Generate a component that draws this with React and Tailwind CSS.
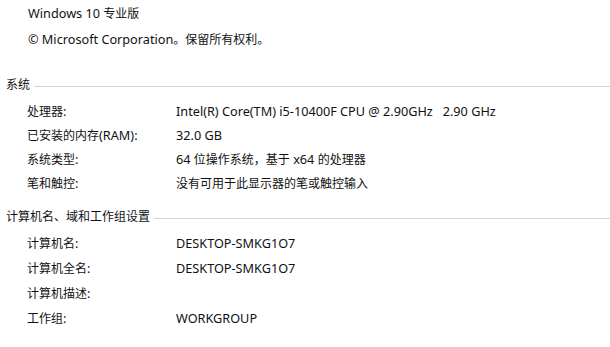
// split a string into CJK / latin runs so latin can be sized a bit larger
function Txt({ children }) {
  const parts = String(children).split(/([\u3000-\u303f\u4e00-\u9fff\uff00-\uffef]+)/);
  return parts.map((p, i) =>
    p === "" ? null : /[\u3000-\u303f\u4e00-\u9fff\uff00-\uffef]/.test(p) ? (
      <span key={i} className="text-[12px]">{p}</span>
    ) : (
      <span key={i} className="text-[12.7px] whitespace-pre">{p}</span>
    )
  );
}

export default function App() {
  const system = [
    ["处理器:", "Intel(R) Core(TM) i5-10400F CPU @ 2.90GHz   2.90 GHz"],
    ["已安装的内存(RAM):", "32.0 GB"],
    ["系统类型:", "64 位操作系统，基于 x64 的处理器"],
    ["笔和触控:", "没有可用于此显示器的笔或触控输入"],
  ];
  const computer = [
    ["计算机名:", "DESKTOP-SMKG1O7"],
    ["计算机全名:", "DESKTOP-SMKG1O7"],
    ["计算机描述:", ""],
    ["工作组:", "WORKGROUP"],
  ];

  return (
    <div
      className="w-[610px] h-[347px] overflow-hidden bg-white text-[12px] text-[#111]"
      style={{ fontFamily: '"Segoe UI", "Noto Sans", "Noto Sans CJK SC", sans-serif' }}
    >
      {/* edition */}
      <div className="pl-[28px] pt-[1px]">
        <div className="h-[26px] flex items-center"><Txt>Windows 10 专业版</Txt></div>
        <div className="h-[26px] flex items-center"><Txt>© Microsoft Corporation。保留所有权利。</Txt></div>
      </div>

      {/* system */}
      <div className="mt-[20px] h-[24px] flex items-center pl-[6px]">
        <span>系统</span>
        <div className="flex-1 h-px bg-[#d4d4d4] ml-[4px] mt-[3px]" />
      </div>
      <div className="pl-[27px] pt-[3px]">
        {system.map(([k, v]) => (
          <div key={k} className="grid grid-cols-[149px_1fr] h-[24px] items-center">
            <span><Txt>{k}</Txt></span>
            <span><Txt>{v}</Txt></span>
          </div>
        ))}
      </div>

      {/* computer name */}
      <div className="mt-[9px] h-[24px] flex items-center pl-[6px]">
        <span>计算机名、域和工作组设置</span>
        <div className="flex-1 h-px bg-[#d4d4d4] ml-[4px] mt-[3px]" />
      </div>
      <div className="pl-[27px] pt-[2px]">
        {computer.map(([k, v]) => (
          <div key={k} className="grid grid-cols-[149px_1fr] h-[25px] items-center">
            <span><Txt>{k}</Txt></span>
            <span>{v && <Txt>{v}</Txt>}</span>
          </div>
        ))}
      </div>
    </div>
  );
}
